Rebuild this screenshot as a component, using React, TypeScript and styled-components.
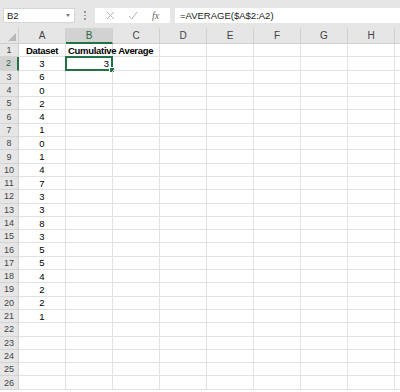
import { Fragment } from 'react';
import styled, { createGlobalStyle } from 'styled-components';

const GlobalStyle = createGlobalStyle`
  html, body {
    margin: 0;
    padding: 0;
    background: #ffffff;
  }
  body {
    font-family: 'Liberation Sans', Arial, sans-serif;
    overflow: hidden;
  }
`;

const Window = styled.div`
  width: 400px;
  height: 392px;
  overflow: hidden;
  background: #ffffff;
`;

const FormulaBar = styled.div`
  height: 28px;
  background: #e6e6e6;
  display: flex;
  align-items: flex-start;
  padding-top: 8px;
  box-sizing: border-box;
`;

const NameBox = styled.div`
  margin-left: 3px;
  width: 72px;
  height: 15px;
  background: #ffffff;
  border: 1px solid #d6d6d6;
  box-sizing: border-box;
  display: flex;
  align-items: center;
  justify-content: space-between;
  padding: 0 4px 0 3px;
  font-size: 9.5px;
  color: #222;
`;

const Caret = styled.span`
  width: 0;
  height: 0;
  border-left: 2.5px solid transparent;
  border-right: 2.5px solid transparent;
  border-top: 3px solid #7a7a7a;
`;

const Grip = styled.div`
  width: 20px;
  height: 15px;
  display: flex;
  flex-direction: column;
  align-items: center;
  justify-content: center;
  gap: 2px;
`;

const GripDot = styled.span`
  width: 1.5px;
  height: 1.5px;
  background: #9a9a9a;
`;

const ButtonBox = styled.div`
  width: 75px;
  height: 15px;
  background: #ffffff;
  display: flex;
  align-items: center;
  justify-content: space-around;
  padding: 0 4px;
  box-sizing: border-box;
`;

const Fx = styled.span`
  font-family: 'Liberation Serif', 'Times New Roman', serif;
  font-style: italic;
  font-size: 10px;
  color: #6a6a6a;
`;

const FormulaInput = styled.div`
  flex: 1;
  margin-left: 5px;
  height: 15px;
  background: #ffffff;
  display: flex;
  align-items: center;
  padding-left: 5px;
  font-size: 9.5px;
  color: #222;
`;

const Sheet = styled.div`
  display: grid;
  grid-template-columns: 19px repeat(9, 47px);
  grid-template-rows: 16px repeat(26, 13.3px);
`;

const Corner = styled.div`
  background: #e6e6e6;
  border-right: 1px solid #cfcfcf;
  border-bottom: 1px solid #cfcfcf;
  position: relative;
  &::after {
    content: '';
    position: absolute;
    right: 2px;
    bottom: 2px;
    width: 0;
    height: 0;
    border-left: 8px solid transparent;
    border-bottom: 8px solid #b8b8b8;
  }
`;

const ColHead = styled.div<{ $active?: boolean }>`
  background: ${p => (p.$active ? '#d2d2d2' : '#e6e6e6')};
  border-right: 1px solid #d0d0d0;
  border-bottom: ${p => (p.$active ? '2px solid #217346' : '1px solid #cfcfcf')};
  color: ${p => (p.$active ? '#1e6b40' : '#444')};
  font-size: 10px;
  display: flex;
  align-items: center;
  justify-content: center;
  box-sizing: border-box;
`;

const RowHead = styled.div<{ $active?: boolean }>`
  background: ${p => (p.$active ? '#d2d2d2' : '#e6e6e6')};
  border-right: ${p => (p.$active ? '2px solid #217346' : '1px solid #cfcfcf')};
  border-bottom: 1px solid #d4d4d4;
  color: ${p => (p.$active ? '#1e6b40' : '#444')};
  font-size: 9px;
  display: flex;
  align-items: center;
  justify-content: center;
  box-sizing: border-box;
`;

const Cell = styled.div<{ $align?: 'left' | 'center' | 'right'; $bold?: boolean }>`
  border-right: 1px solid #e1e1e1;
  border-bottom: 1px solid #e1e1e1;
  box-sizing: border-box;
  font-size: 9.5px;
  font-weight: ${p => (p.$bold ? 700 : 400)};
  letter-spacing: ${p => (p.$bold ? '-0.3px' : '0')};
  color: #000;
  display: flex;
  align-items: center;
  justify-content: ${p =>
    p.$align === 'center' ? 'center' : p.$align === 'right' ? 'flex-end' : 'flex-start'};
  padding: 0 2px;
  white-space: nowrap;
  overflow: visible;
  position: relative;
  z-index: 1;
`;

const Selection = styled.span`
  position: absolute;
  left: -1px;
  top: -1px;
  right: -1px;
  bottom: -1px;
  border: 2px solid #217346;
  pointer-events: none;
  &::after {
    content: '';
    position: absolute;
    right: -4px;
    bottom: -4px;
    width: 4px;
    height: 4px;
    background: #217346;
    border: 1px solid #fff;
  }
`;

const CellValue = styled.span`
  position: relative;
  z-index: 2;
  padding-right: 1px;
`;

// the last column is only a sliver at the window edge, its letter is out of view
const columns = ['A', 'B', 'C', 'D', 'E', 'F', 'G', 'H', ''];
const dataset = [3, 6, 0, 2, 4, 1, 0, 1, 4, 7, 3, 3, 8, 3, 5, 5, 4, 2, 2, 1];

function CancelIcon() {
  return (
    <svg width="9" height="9" viewBox="0 0 9 9">
      <path d="M1 1 L8 8 M8 1 L1 8" stroke="#b4b4b4" strokeWidth="1" fill="none" />
    </svg>
  );
}

function EnterIcon() {
  return (
    <svg width="10" height="9" viewBox="0 0 10 9">
      <path d="M1 5 L3.8 8 L9 1" stroke="#b4b4b4" strokeWidth="1" fill="none" />
    </svg>
  );
}

function App() {
  const rows = Array.from({ length: 26 }, (_, i) => i + 1);

  const renderCell = (row: number, col: string, idx: number) => {
    const key = `${idx}-${row}`;
    if (row === 1 && col === 'A') return <Cell key={key} $align="center" $bold>Dataset</Cell>;
    if (row === 1 && col === 'B') return <Cell key={key} $bold>Cumulative Average</Cell>;
    if (row === 2 && col === 'B')
      return (
        <Cell key={key} $align="right">
          <CellValue>3</CellValue>
          <Selection />
        </Cell>
      );
    if (col === 'A' && row >= 2 && row <= 21)
      return <Cell key={key} $align="center">{dataset[row - 2]}</Cell>;
    return <Cell key={key} />;
  };

  return (
    <>
      <GlobalStyle />
      <Window>
        <FormulaBar>
          <NameBox>
            <span>B2</span>
            <Caret />
          </NameBox>
          <Grip>
            <GripDot />
            <GripDot />
            <GripDot />
          </Grip>
          <ButtonBox>
            <CancelIcon />
            <EnterIcon />
            <Fx>fx</Fx>
          </ButtonBox>
          <FormulaInput>=AVERAGE($A$2:A2)</FormulaInput>
        </FormulaBar>
        <Sheet>
          <Corner />
          {columns.map((c, i) => (
            <ColHead key={i} $active={c === 'B'}>{c}</ColHead>
          ))}
          {rows.map(r => (
            <Fragment key={r}>
              <RowHead $active={r === 2}>{r}</RowHead>
              {columns.map((c, i) => renderCell(r, c, i))}
            </Fragment>
          ))}
        </Sheet>
      </Window>
    </>
  );
}

export default App;
